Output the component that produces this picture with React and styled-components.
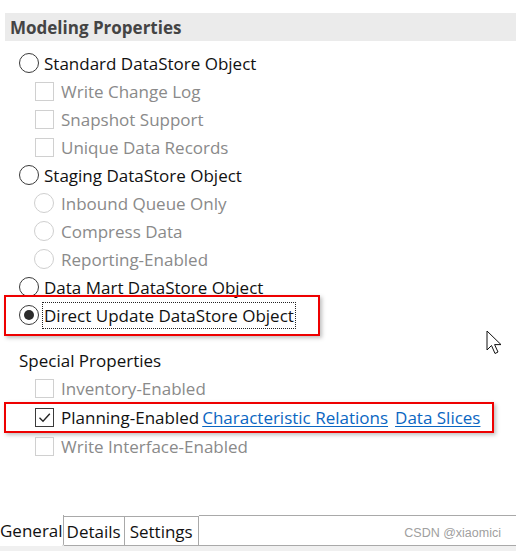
import React from 'react';
import styled, { createGlobalStyle } from 'styled-components';

const GlobalStyle = createGlobalStyle`
  html, body {
    margin: 0;
    padding: 0;
    background: #ffffff;
  }
  body {
    font-family: "Open Sans", "Noto Sans", sans-serif;
  }
`;

const Page = styled.div`
  position: relative;
  width: 516px;
  height: 551px;
  display: flex;
  flex-direction: column;
  overflow: hidden;
`;

const Header = styled.div`
  margin: 13px 0 0 5px;
  height: 28px;
  padding-left: 5px;
  display: flex;
  align-items: center;
  background: #ebebeb;
  color: #444444;
  font-weight: 700;
  font-size: 17px;
`;

const Body = styled.div`
  display: flex;
  flex-direction: column;
  padding-top: 8px;
`;

const Row = styled.div`
  position: relative;
  height: 28px;
  display: flex;
  align-items: center;
  gap: ${(p) => (p.$sub ? '7px' : '5px')};
  padding-left: ${(p) => (p.$sub ? '34px' : '19px')};
  font-size: 17px;
  color: ${(p) => (p.$disabled ? '#8a8a8a' : '#111111')};
  margin-top: ${(p) => p.$gap || 0}px;
`;

const Highlight = styled.div`
  position: absolute;
  left: 4px;
  right: ${(p) => p.$right}px;
  top: ${(p) => p.$top}px;
  bottom: ${(p) => p.$bottom}px;
  border: 2px solid #ee0000;
  box-shadow: 2px 2px 4px rgba(0, 0, 0, 0.25);
  pointer-events: none;
`;

const Radio = styled.span`
  box-sizing: border-box;
  width: 20px;
  height: 20px;
  border-radius: 50%;
  border: 1.3px solid ${(p) => (p.$disabled ? '#cfcfcf' : '#3a3a3a')};
  display: flex;
  align-items: center;
  justify-content: center;
  flex-shrink: 0;
  &::after {
    content: '';
    display: ${(p) => (p.$checked ? 'block' : 'none')};
    width: 10px;
    height: 10px;
    border-radius: 50%;
    background: #2b2b2b;
  }
`;

const Box = styled.span`
  box-sizing: border-box;
  width: 19px;
  height: 19px;
  border: 1.3px solid ${(p) => (p.$disabled ? '#d0d0d0' : '#3a3a3a')};
  display: flex;
  align-items: center;
  justify-content: center;
  flex-shrink: 0;
  margin-left: 1px;
`;

const Focus = styled.span`
  outline: 1px dotted #222222;
  outline-offset: 0;
  padding: 1px 1px;
  margin-left: -1px;
`;

const Section = styled.div`
  height: 28px;
  display: flex;
  align-items: center;
  padding-left: 19px;
  margin-top: 17px;
  font-size: 17px;
  color: #111111;
`;

const Link = styled.a`
  color: #0a66c2;
  text-decoration: underline;
  text-underline-offset: 2px;
  cursor: pointer;
  margin-left: ${(p) => p.$ml || 0}px;
`;

const Tabs = styled.div`
  margin-top: auto;
  display: flex;
  align-items: flex-end;
  height: 31px;
  border-bottom: 5px solid #f0f0f0;
`;

const Tab = styled.div`
  box-sizing: border-box;
  height: ${(p) => (p.$active ? '31px' : '30px')};
  display: flex;
  align-items: center;
  padding: 0 ${(p) => p.$pad}px;
  font-size: 17px;
  color: #111111;
  background: #ffffff;
  border-top: ${(p) => (p.$active ? 'none' : '1px solid #a9a9a9')};
  border-right: 1px solid #a9a9a9;
  border-bottom: ${(p) => (p.$active ? 'none' : '1px solid #a9a9a9')};
  border-bottom-right-radius: ${(p) => (p.$active ? '2px' : '0')};
`;

const TabFill = styled.div`
  flex: 1;
  height: 31px;
  box-sizing: border-box;
  border-top: 1px solid #a9a9a9;
  border-bottom: 1px solid #a9a9a9;
  display: flex;
  align-items: flex-end;
  justify-content: flex-end;
  padding: 0 15px 5px 0;
`;

const Watermark = styled.span`
  font-family: "Liberation Sans", Arial, sans-serif;
  font-size: 12.5px;
  color: #a0a0a0;
`;

const Cursor = styled.svg`
  position: absolute;
  left: 486px;
  top: 330px;
`;

const Check = () => (
  <svg width="15" height="15" viewBox="0 0 15 15">
    <path d="M2.5 7.8 L6 11.2 L12.8 3.8" fill="none" stroke="#222" strokeWidth="1.4" />
  </svg>
);

export default function App() {
  return (
    <Page>
      <GlobalStyle />
      <Header>Modeling Properties</Header>
      <Body>
        <Row>
          <Radio />
          Standard DataStore Object
        </Row>
        <Row $sub $disabled>
          <Box $disabled />
          Write Change Log
        </Row>
        <Row $sub $disabled>
          <Box $disabled />
          Snapshot Support
        </Row>
        <Row $sub $disabled>
          <Box $disabled />
          Unique Data Records
        </Row>
        <Row>
          <Radio />
          Staging DataStore Object
        </Row>
        <Row $sub $disabled>
          <Radio $disabled />
          Inbound Queue Only
        </Row>
        <Row $sub $disabled>
          <Radio $disabled />
          Compress Data
        </Row>
        <Row $sub $disabled>
          <Radio $disabled />
          Reporting-Enabled
        </Row>
        <Row>
          <Radio />
          Data Mart DataStore Object
        </Row>
        <Row>
          <Radio $checked />
          <Focus>Direct Update DataStore Object</Focus>
          <Highlight $top={-6} $bottom={-7} $right={196} />
        </Row>
        <Section>Special Properties</Section>
        <Row $sub $disabled>
          <Box $disabled />
          Inventory-Enabled
        </Row>
        <Row $sub $gap={1}>
          <Box>
            <Check />
          </Box>
          <span>
            Planning-Enabled
            <Link $ml={3}>Characteristic Relations</Link>
            <Link $ml={7}>Data Slices</Link>
          </span>
          <Highlight $top={-1} $bottom={-2} $right={22} />
        </Row>
        <Row $sub $disabled $gap={1}>
          <Box $disabled />
          Write Interface-Enabled
        </Row>
      </Body>
      <Tabs>
        <Tab $active $pad={0}>General</Tab>
        <Tab $pad={3}>Details</Tab>
        <Tab $pad={5}>Settings</Tab>
        <TabFill>
          <Watermark>CSDN @xiaomici</Watermark>
        </TabFill>
      </Tabs>
      <Cursor width="20" height="28" viewBox="0 0 20 28">
        <path d="M1 1 L1 20 L5.5 15.5 L9 23.5 L12 22 L8.6 14.6 L15 14.6 Z" fill="#fff" stroke="#111" strokeWidth="1" strokeLinejoin="miter" />
      </Cursor>
    </Page>
  );
}
